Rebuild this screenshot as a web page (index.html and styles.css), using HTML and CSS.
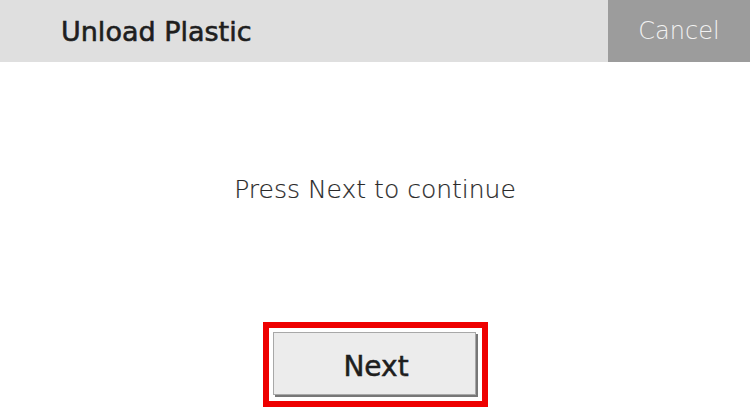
FILE: index.html
```html
<!DOCTYPE html>
<html>
<head>
<meta charset="utf-8">
<link rel="stylesheet" href="styles.css">
</head>
<body>
<div class="screen">
  <header class="topbar">
    <div class="title">Unload Plastic</div>
    <div class="cancel">Cancel</div>
  </header>
  <main class="content">
    <p class="message">Press Next to continue</p>
    <div class="focus">
      <button class="btn">Next</button>
    </div>
  </main>
</div>
</body>
</html>
```
FILE: styles.css
```css
html, body {
  margin: 0;
  padding: 0;
  background: #ffffff;
}
.screen {
  width: 750px;
  height: 411px;
  display: flex;
  flex-direction: column;
  font-family: "DejaVu Sans", sans-serif;
  overflow: hidden;
}
.topbar {
  height: 62px;
  display: flex;
  background: #dfdfdf;
  flex: none;
}
.title {
  flex: 1;
  display: flex;
  align-items: center;
  padding-left: 61px;
  font-size: 27px;
  font-weight: normal;
  color: #1e1e1e;
  -webkit-text-stroke: 0.6px #1e1e1e;
}
.cancel {
  width: 142px;
  display: flex;
  align-items: center;
  justify-content: center;
  background: #9c9c9c;
  color: #f2f2f2;
  font-size: 24px;
  font-weight: 200;
}
.content {
  flex: 1;
  display: flex;
  flex-direction: column;
  align-items: center;
}
.message {
  margin: 112px 0 0 0;
  font-size: 25px;
  font-weight: 200;
  color: #2a2a2a;
  line-height: 32px;
  -webkit-text-stroke: 0.2px #2a2a2a;
}
.focus {
  margin-top: auto;
  margin-bottom: 4px;
  border: 6px solid #ee0000;
  padding: 4px;
  width: 205px;
  height: 65px;
}
.btn {
  box-sizing: border-box;
  width: 203px;
  height: 63px;
  margin: 0;
  padding: 5px 0 0 4px;
  background: #ececec;
  border: 1px solid #a8a8a8;
  box-shadow: 2px 2px 0 #777777;
  font-family: "DejaVu Sans", sans-serif;
  font-size: 28px;
  color: #1e1e1e;
  -webkit-text-stroke: 0.5px #1e1e1e;
}
```
